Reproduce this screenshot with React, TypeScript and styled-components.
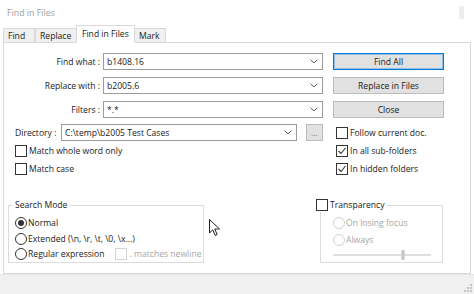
import React from 'react';
import styled, {createGlobalStyle} from 'styled-components';

const GlobalStyle = createGlobalStyle`
    html, body {
        margin: 0;
        padding: 0;
        background: #ffffff;
    }
`;

const Window = styled.div`
    position: relative;
    width: 474px;
    height: 294px;
    display: flex;
    flex-direction: column;
    background: #ffffff;
    font-family: "Open Sans", "Liberation Sans", sans-serif;
    font-size: 8.6px;
    color: #1a1a1a;
    overflow: hidden;
`;

const TitleBar = styled.div`
    height: 25px;
    display: flex;
    align-items: center;
    justify-content: space-between;
    padding: 0 10px 0 7px;
    color: #a0a0a0;
    font-size: 8.8px;
`;

const CloseGhost = styled.div`
    width: 5px;
    height: 13px;
    background: #ececec;
`;

const TabStrip = styled.div`
    display: flex;
    align-items: flex-end;
    height: 18px;
    padding-left: 3px;
    margin-bottom: -1px;
    position: relative;
    z-index: 1;
`;

const Tab = styled.div<{$active?: boolean; $width: number}>`
    width: ${(p) => p.$width}px;
    height: ${(p) => (p.$active ? 18 : 15)}px;
    box-sizing: border-box;
    display: flex;
    align-items: center;
    padding-left: ${(p) => (p.$active ? 5 : 4)}px;
    white-space: nowrap;
    border: 1px solid #d9d9d9;
    border-bottom: ${(p) => (p.$active ? '1px solid #ffffff' : '1px solid #d9d9d9')};
    margin-left: ${(p) => (p.$active ? -1 : 0)}px;
    margin-right: ${(p) => (p.$active ? -1 : 0)}px;
    background: ${(p) => (p.$active ? '#ffffff' : '#f0f0f0')};
    position: relative;
    z-index: ${(p) => (p.$active ? 2 : 1)};
    & + & {
        border-left: ${(p) => (p.$active ? '1px solid #d9d9d9' : 'none')};
    }
`;

const Panel = styled.div`
    height: 232px;
    box-sizing: border-box;
    margin: 0 3px;
    border: 1px solid #d9d9d9;
    padding: 10px 0 0 0;
    display: flex;
    flex-direction: column;
`;

const FieldRow = styled.div`
    display: flex;
    align-items: center;
    height: 17px;
    margin-bottom: 7px;
`;

const RightLabel = styled.div`
    width: 96px;
    text-align: right;
    padding-right: 3px;
    white-space: nowrap;
`;

const Combo = styled.div<{$width: number}>`
    width: ${(p) => p.$width}px;
    height: 17px;
    box-sizing: border-box;
    border: 1px solid #9c9c9c;
    display: flex;
    align-items: center;
    justify-content: space-between;
    padding: 0 4px 0 3px;
    background: #ffffff;
    white-space: nowrap;
`;

const Chevron = () => (
    <svg
        width='8'
        height='5'
        viewBox='0 0 8 5'
    >
        <polyline
            points='0.5,0.5 4,4 7.5,0.5'
            fill='none'
            stroke='#606060'
            strokeWidth='1'
        />
    </svg>
);

const Button = styled.div<{$primary?: boolean; $width: number}>`
    width: ${(p) => p.$width}px;
    height: 17px;
    box-sizing: border-box;
    margin-left: ${(p) => (p.$width < 30 ? 9 : 10)}px;
    display: flex;
    align-items: center;
    justify-content: center;
    background: #e1e1e1;
    border: 1px solid ${(p) => (p.$primary ? '#0078d7' : '#bcbcbc')};
    box-shadow: ${(p) => (p.$primary ? 'inset 0 0 0 1px #8fc1ea' : 'none')};
    color: ${(p) => (p.$width < 30 ? '#777' : '#1a1a1a')};
`;

const OptionGrid = styled.div`
    display: grid;
    grid-template-columns: 332px 1fr;
    grid-auto-rows: 17px;
    row-gap: 1px;
    margin-top: -1px;
`;

const DirectoryRow = styled.div`
    display: flex;
    align-items: center;
    padding-left: 11px;
    height: 17px;
    margin-bottom: 3px;
`;

const DirLabel = styled.div`
    width: 44px;
    padding-right: 2px;
    white-space: nowrap;
`;

const Check = styled.label<{$disabled?: boolean}>`
    display: flex;
    align-items: center;
    gap: 2px;
    padding-left: ${(p) => (p.$disabled ? 0 : 11)}px;
    color: ${(p) => (p.$disabled ? '#a6a6a6' : '#1a1a1a')};
    white-space: nowrap;
`;

const RightCheck = styled(Check)`
    padding-left: 0;
`;

const Box = styled.span<{$disabled?: boolean}>`
    width: 12px;
    height: 12px;
    box-sizing: border-box;
    border: 1px solid ${(p) => (p.$disabled ? '#d4d4d4' : '#333333')};
    background: #ffffff;
    display: flex;
    align-items: center;
    justify-content: center;
    flex-shrink: 0;
`;

const Tick = () => (
    <svg
        width='10'
        height='10'
        viewBox='0 0 10 10'
    >
        <polyline
            points='1.5,5 4,7.5 8.5,2'
            fill='none'
            stroke='#333333'
            strokeWidth='1.1'
        />
    </svg>
);

const BottomRow = styled.div`
    display: flex;
    margin-top: 28px;
    padding-left: 4px;
`;

const GroupBox = styled.div<{$width: number; $offset: number; $inset: number}>`
    position: relative;
    width: ${(p) => p.$width}px;
    height: 58px;
    box-sizing: border-box;
    margin-left: ${(p) => p.$offset}px;
    border: 1px solid #dcdcdc;
    padding: 9px 0 0 ${(p) => p.$inset}px;
    display: flex;
    flex-direction: column;
`;

const GroupTitle = styled.div`
    position: absolute;
    top: -7px;
    left: 4px;
    padding: 0 2px;
    background: #ffffff;
    line-height: 13px;
`;

const GroupCheckTitle = styled.div`
    position: absolute;
    top: -8px;
    left: -5px;
    padding-right: 3px;
    background: #ffffff;
    display: flex;
    align-items: center;
    gap: 2px;
    line-height: 14px;
`;

const RadioRow = styled.div<{$disabled?: boolean}>`
    display: flex;
    align-items: center;
    height: 16.5px;
    gap: 1px;
    color: ${(p) => (p.$disabled ? '#a6a6a6' : '#1a1a1a')};
    white-space: nowrap;
`;

const Radio = styled.span<{$checked?: boolean; $disabled?: boolean}>`
    width: 12px;
    height: 12px;
    box-sizing: border-box;
    border-radius: 50%;
    border: 1px solid ${(p) => (p.$disabled ? '#d0d0d0' : '#333333')};
    display: flex;
    align-items: center;
    justify-content: center;
    flex-shrink: 0;
    &::after {
        content: '';
        display: ${(p) => (p.$checked ? 'block' : 'none')};
        width: 6px;
        height: 6px;
        border-radius: 50%;
        background: #333333;
    }
`;

const NewlineOption = styled.div`
    margin-left: 10px;
    display: flex;
    align-items: center;
    gap: 2px;
    color: #a6a6a6;
`;

const SliderTrack = styled.div`
    position: relative;
    width: 98px;
    height: 2px;
    margin: 6px 0 0 0;
    background: #e0e0e0;
`;

const SliderThumb = styled.div`
    position: absolute;
    left: 68px;
    top: -4px;
    width: 4px;
    height: 10px;
    background: #c8c8c8;
    border: 1px solid #d6d6d6;
    box-sizing: border-box;
`;

const StatusBar = styled.div`
    flex: 1;
    background: #f0f0f0;
    border-top: 1px solid #e6e6e6;
    display: flex;
    justify-content: flex-end;
    align-items: flex-end;
    padding: 0 2px 2px 0;
`;

const Cursor = styled.svg`
    position: absolute;
    left: 209px;
    top: 219px;
`;

const Grip = () => (
    <svg
        width='8'
        height='8'
        viewBox='0 0 8 8'
    >
        {[[6, 0], [3, 3], [6, 3], [0, 6], [3, 6], [6, 6]].map(([x, y]) => (
            <rect
                key={`${x}-${y}`}
                x={x}
                y={y}
                width='2'
                height='2'
                fill='#c4c4c4'
            />
        ))}
    </svg>
);

const fields = [
    {label: 'Find what :', value: 'b1408.16', button: 'Find All', primary: true},
    {label: 'Replace with :', value: 'b2005.6', button: 'Replace in Files'},
    {label: 'Filters :', value: '*.*', button: 'Close'},
];

const App = () => {
    return (
        <>
            <GlobalStyle/>
            <Window>
                <TitleBar>
                    {'Find in Files'}
                    <CloseGhost/>
                </TitleBar>
                <TabStrip>
                    <Tab $width={32}>{'Find'}</Tab>
                    <Tab $width={42}>{'Replace'}</Tab>
                    <Tab
                        $active={true}
                        $width={59}
                    >
                        {'Find in Files'}
                    </Tab>
                    <Tab $width={32}>{'Mark'}</Tab>
                </TabStrip>
                <Panel>
                    {fields.map((f) => (
                        <FieldRow key={f.label}>
                            <RightLabel>{f.label}</RightLabel>
                            <Combo $width={220}>
                                <span>{f.value}</span>
                                <Chevron/>
                            </Combo>
                            <Button
                                $width={111}
                                $primary={f.primary}
                            >
                                {f.button}
                            </Button>
                        </FieldRow>
                    ))}
                    <OptionGrid>
                        <DirectoryRow>
                            <DirLabel>{'Directory :'}</DirLabel>
                            <Combo $width={236}>
                                <span>{'C:\\temp\\b2005 Test Cases'}</span>
                                <Chevron/>
                            </Combo>
                            <Button $width={17}>{'...'}</Button>
                        </DirectoryRow>
                        <RightCheck>
                            <Box/>
                            {'Follow current doc.'}
                        </RightCheck>
                        <Check>
                            <Box/>
                            {'Match whole word only'}
                        </Check>
                        <RightCheck>
                            <Box><Tick/></Box>
                            {'In all sub-folders'}
                        </RightCheck>
                        <Check>
                            <Box/>
                            {'Match case'}
                        </Check>
                        <RightCheck>
                            <Box><Tick/></Box>
                            {'In hidden folders'}
                        </RightCheck>
                    </OptionGrid>
                    <BottomRow>
                        <GroupBox
                            $width={196}
                            $offset={0}
                            $inset={6}
                        >
                            <GroupTitle>{'Search Mode'}</GroupTitle>
                            <RadioRow>
                                <Radio $checked={true}/>
                                {'Normal'}
                            </RadioRow>
                            <RadioRow>
                                <Radio/>
                                {'Extended (\\n, \\r, \\t, \\0, \\x...)'}
                            </RadioRow>
                            <RadioRow>
                                <Radio/>
                                {'Regular expression'}
                                <NewlineOption>
                                    <Box $disabled={true}/>
                                    {'. matches newline'}
                                </NewlineOption>
                            </RadioRow>
                        </GroupBox>
                        <GroupBox
                            $width={123}
                            $offset={116}
                            $inset={12}
                        >
                            <GroupCheckTitle>
                                <Box/>
                                {'Transparency'}
                            </GroupCheckTitle>
                            <RadioRow $disabled={true}>
                                <Radio $disabled={true}/>
                                {'On losing focus'}
                            </RadioRow>
                            <RadioRow $disabled={true}>
                                <Radio $disabled={true}/>
                                {'Always'}
                            </RadioRow>
                            <SliderTrack>
                                <SliderThumb/>
                            </SliderTrack>
                        </GroupBox>
                    </BottomRow>
                </Panel>
                <StatusBar>
                    <Grip/>
                </StatusBar>
                <Cursor
                    width='12'
                    height='18'
                    viewBox='0 0 12 18'
                >
                    <path
                        d='M0.5,0.5 L0.5,14 L3.8,10.8 L6.2,16.5 L8.2,15.6 L5.8,10 L10.5,10 Z'
                        fill='#ffffff'
                        stroke='#222222'
                        strokeWidth='1'
                        strokeLinejoin='round'
                    />
                </Cursor>
            </Window>
        </>
    );
};

export default App;
